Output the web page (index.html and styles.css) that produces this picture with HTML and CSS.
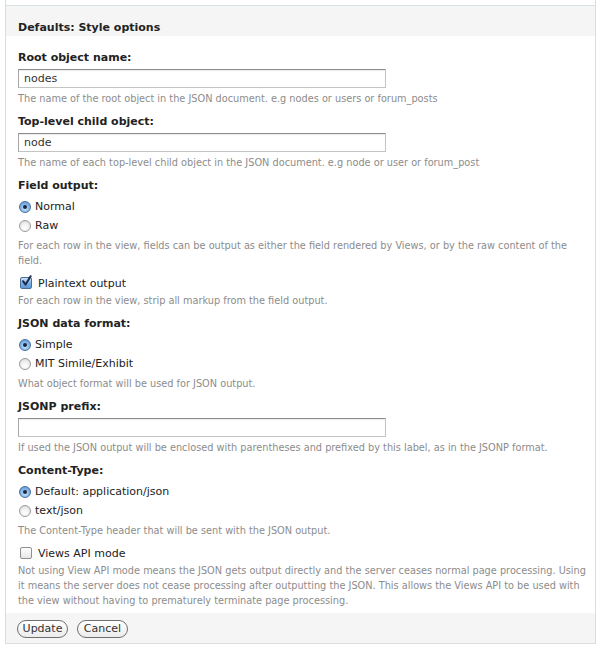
FILE: index.html
```html
<!DOCTYPE html>
<html>
<head>
<meta charset="utf-8">
<link rel="stylesheet" href="styles.css">
</head>
<body>
<div class="panel">
  <div class="top-gap"></div>
  <div class="header">Defaults: Style options</div>
  <div class="content">
    <div class="form-item">
      <label class="title">Root object name:</label>
      <div class="textfield">nodes</div>
      <div class="desc">The name of the root object in the JSON document. e.g nodes or users or forum_posts</div>
    </div>
    <div class="form-item">
      <label class="title">Top-level child object:</label>
      <div class="textfield">node</div>
      <div class="desc">The name of each top-level child object in the JSON document. e.g node or user or forum_post</div>
    </div>
    <div class="form-item">
      <label class="title">Field output:</label>
      <div class="option"><span class="radio checked"></span><span class="opt-text">Normal</span></div>
      <div class="option"><span class="radio"></span><span class="opt-text">Raw</span></div>
      <div class="desc">For each row in the view, fields can be output as either the field rendered by Views, or by the raw content of the<br>field.</div>
    </div>
    <div class="form-item">
      <div class="option check-row"><span class="checkbox checked"><svg width="13" height="13" viewBox="0 0 13 13"><path d="M3 6.2 L5.6 9.6 L10.6 1.2" fill="none" stroke="#1d2a4a" stroke-width="2" stroke-linecap="round" stroke-linejoin="round"/></svg></span><span class="opt-text">Plaintext output</span></div>
      <div class="desc">For each row in the view, strip all markup from the field output.</div>
    </div>
    <div class="form-item">
      <label class="title">JSON data format:</label>
      <div class="option"><span class="radio checked"></span><span class="opt-text">Simple</span></div>
      <div class="option"><span class="radio"></span><span class="opt-text">MIT Simile/Exhibit</span></div>
      <div class="desc">What object format will be used for JSON output.</div>
    </div>
    <div class="form-item">
      <label class="title">JSONP prefix:</label>
      <div class="textfield"></div>
      <div class="desc">If used the JSON output will be enclosed with parentheses and prefixed by this label, as in the JSONP format.</div>
    </div>
    <div class="form-item">
      <label class="title">Content-Type:</label>
      <div class="option"><span class="radio checked"></span><span class="opt-text">Default: application/json</span></div>
      <div class="option"><span class="radio"></span><span class="opt-text">text/json</span></div>
      <div class="desc">The Content-Type header that will be sent with the JSON output.</div>
    </div>
    <div class="form-item last">
      <div class="option check-row"><span class="checkbox"></span><span class="opt-text">Views API mode</span></div>
      <div class="desc">Not using View API mode means the JSON gets output directly and the server ceases normal page processing. Using<br>it means the server does not cease processing after outputting the JSON. This allows the Views API to be used with<br>the view without having to prematurely terminate page processing.</div>
    </div>
  </div>
  <div class="footer">
    <span class="button">Update</span>
    <span class="button">Cancel</span>
  </div>
</div>
</body>
</html>
```
FILE: styles.css
```css
html, body {
  margin: 0;
  padding: 0;
  background: #ffffff;
}
body {
  font-family: "DejaVu Sans", Verdana, sans-serif;
  color: #333;
}
.panel {
  margin-left: 5px;
  width: 589px;
  border-left: 1px solid #dcdcdc;
  border-right: 1px solid #dcdcdc;
  border-bottom: 1px solid #dcdcdc;
}
.top-gap {
  height: 5px;
}
.header {
  border-top: 1px solid #d6e1e5;
  background: #f5f5f5;
  height: 31px;
  box-sizing: border-box;
  padding: 15px 0 0 12px;
  font-size: 11px;
  line-height: 14px;
  font-weight: bold;
  color: #222;
}
.content {
  padding: 14px 12px 0 12px;
}
.form-item {
  margin-bottom: 8px;
}
.form-item.last {
  margin-bottom: 5px;
}
.title {
  display: block;
  font-size: 11px;
  line-height: 16px;
  font-weight: bold;
  color: #222;
  margin-bottom: 3px;
}
.textfield {
  width: 368px;
  height: 19px;
  box-sizing: border-box;
  border: 1px solid #c4c4c4;
  border-top-color: #8e8e8e;
  border-left-color: #a8a8a8;
  box-shadow: inset 0 1px 1px rgba(0,0,0,0.08);
  padding: 0 5px;
  font-size: 11px;
  line-height: 17px;
  color: #333;
  background: #fff;
}
.desc {
  margin-top: 3px;
  margin-right: -10px;
  font-size: 9.75px;
  line-height: 15px;
  color: #8c8c8c;
}
.option {
  display: flex;
  align-items: center;
  height: 19px;
  font-size: 11px;
  color: #222;
}
.option.check-row {
  height: 14px;
}
.radio {
  width: 12px;
  height: 12px;
  border-radius: 50%;
  box-sizing: border-box;
  margin-left: 1px;
  margin-right: 4px;
  border: 1px solid #9a9a9a;
  background: radial-gradient(circle at 50% 70%, #ffffff 0%, #f2f2f2 45%, #d4d4d4 100%);
  position: relative;
}
.radio.checked {
  border: 1px solid #4a6f9e;
  background: radial-gradient(circle at 50% 65%, #d4e8fb 0%, #8cbcea 45%, #4b88cf 100%);
}
.radio.checked::after {
  content: "";
  position: absolute;
  left: 3px;
  top: 3px;
  width: 4px;
  height: 4px;
  border-radius: 50%;
  background: #1c2840;
}
.checkbox {
  width: 12px;
  height: 12px;
  box-sizing: border-box;
  margin-left: 2px;
  margin-right: 6px;
  border: 1px solid #8f8f8f;
  border-radius: 2px;
  background: linear-gradient(#ffffff, #e6e6e6);
  position: relative;
}
.checkbox.checked {
  border-color: #4b6d9a;
  background: linear-gradient(#cfe3f8, #78aee5 55%, #5d97d8);
}
.checkbox svg {
  position: absolute;
  left: -1px;
  top: -3px;
}
.footer {
  background: #f5f5f5;
  height: 30px;
  box-sizing: border-box;
  padding: 7px 0 0 11px;
  display: flex;
  gap: 9px;
}
.button {
  display: block;
  width: 51px;
  height: 18px;
  box-sizing: border-box;
  border: 1px solid #6f6f6f;
  border-radius: 9px;
  background: linear-gradient(#ffffff, #ececec);
  font-size: 11px;
  line-height: 16px;
  text-align: center;
  color: #333;
}
```
